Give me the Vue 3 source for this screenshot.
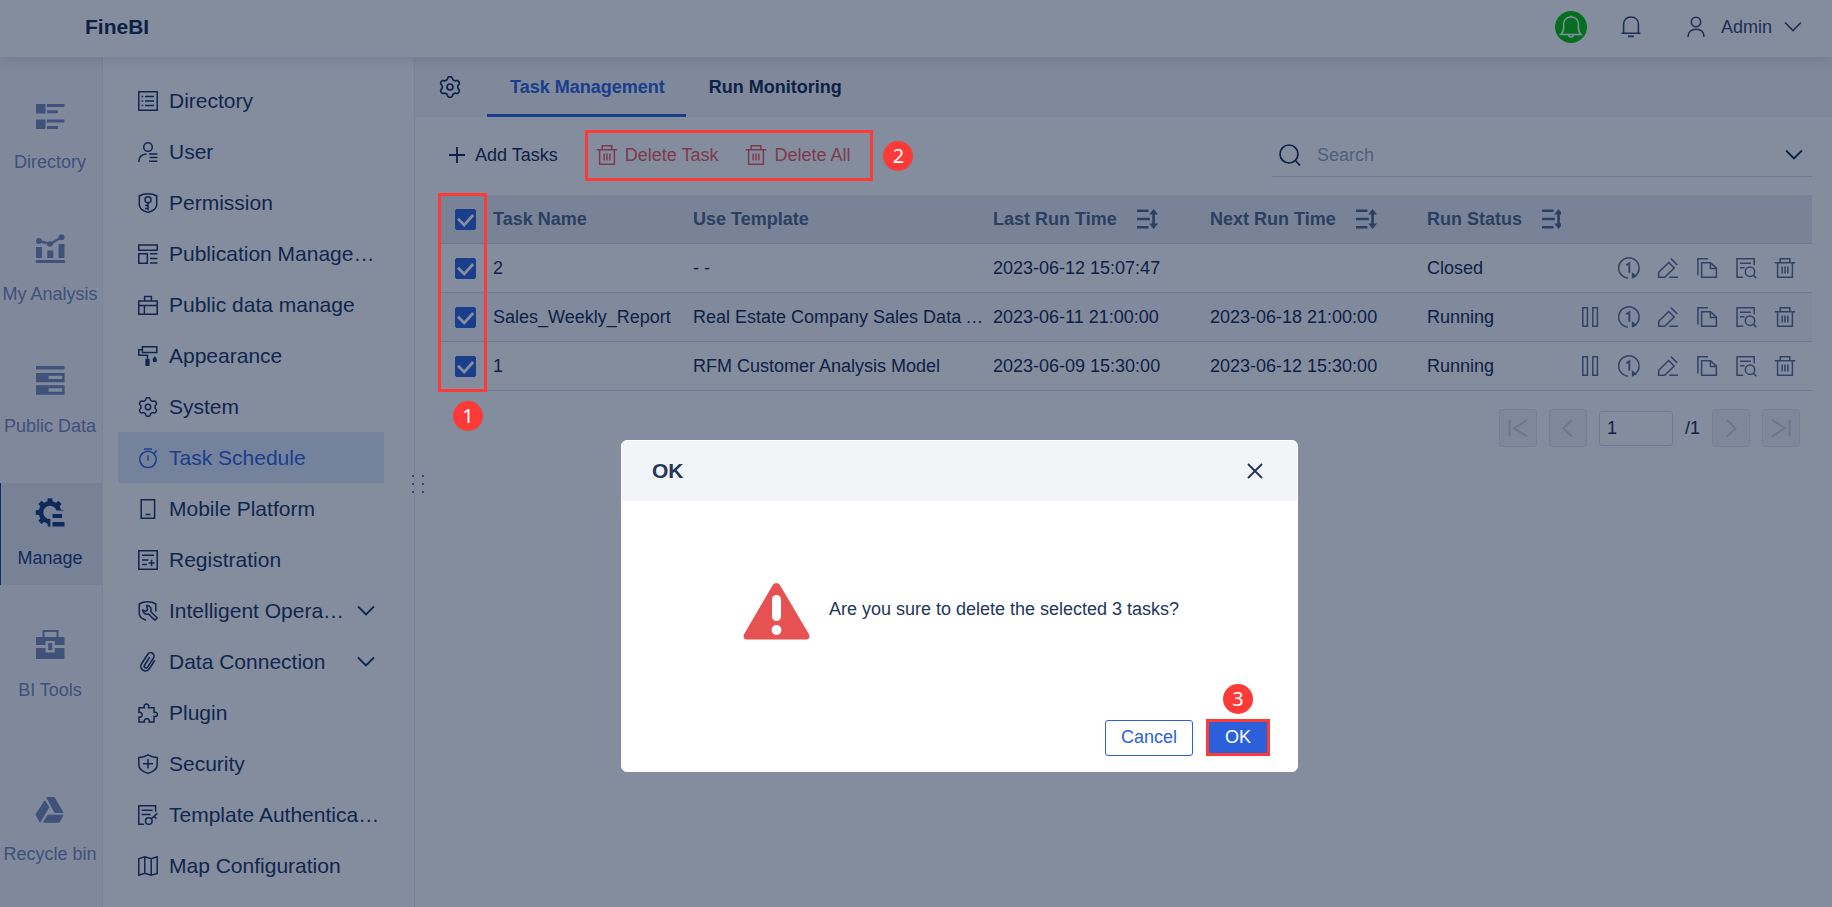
<script setup>
import { ref } from 'vue'

// Outline of a cog with rounded lobes, first lobe pointing up.
function lobedGear(cx, cy, mid, swing, lobes) {
  const points = []
  for (let i = 0; i < 120; i++) {
    const a = (i / 120) * Math.PI * 2
    const r = mid + swing * Math.tanh(2 * Math.cos(lobes * a))
    points.push(`${(cx + r * Math.sin(a)).toFixed(2)} ${(cy - r * Math.cos(a)).toFixed(2)}`)
  }
  return `M${points.join('L')}Z`
}

// Solid cog with square teeth.
function toothedGear(cx, cy, inner, outer, teeth) {
  const points = []
  const step = (Math.PI * 2) / teeth
  for (let i = 0; i < teeth; i++) {
    const corners = [[-0.29, inner], [-0.2, outer], [0.2, outer], [0.29, inner]]
    for (const [offset, r] of corners) {
      const a = (i + offset) * step
      points.push(`${(cx + r * Math.sin(a)).toFixed(2)} ${(cy - r * Math.cos(a)).toFixed(2)}`)
    }
  }
  return `M${points.join('L')}Z`
}

const line = (inner, width = 1.5) =>
  `<g fill="none" stroke="currentColor" stroke-width="${width}">${inner}</g>`

const gear = line(`<path stroke-linejoin="round" d="${lobedGear(10, 10, 8.2, 1.15, 6)}"/><circle cx="10" cy="10" r="2.7"/>`)

const menuIcons = {
  directory: line('<path d="M.8.8h18.400v18.400H.8zM7 5.500h9M7 10h9M7 14.500h9M3.600 5.500h1.600M3.600 10h1.600M3.600 14.500h1.600"/>'),
  user: line('<circle cx="10" cy="5.100" r="4.300"/><path d="M.8 20c0-4.800 3-7.800 7.800-8M11 12h8.400M11.600 15.600h7.800M11 19.200h8.400"/>'),
  permission: line('<path d="M1.300 3C4.200 1.200 7 .8 10 .8s5.800.4 8.700 2.200V12c0 3.600-3.600 5.800-8.700 7.400C4.900 17.800 1.300 15.600 1.300 12z"/><circle cx="10" cy="6.800" r="3"/><path d="M10 9.800v7.400M10 12.600H7.200M10 15.600H7.200"/>'),
  publication: line('<path d="M.8 1h18.400v5.200H.8zM.8 9.800h8.500v9.400H.8zM12 9.800h7.400M12 14.400h7.400M12 19h7.400"/>'),
  publicData: line('<path d="M6.600 6V1.600h6.800V6M.8 6h18.400v13.200H.8zM.8 10.400h18.400M6.400 10.400v8.800"/>'),
  appearance: line('<path d="M4.400.8h14.400v5.800H4.400zM4.400 3.800H.8v5.400h8.700v4"/>') +
    '<path fill="currentColor" d="M7.400 13h4.200v7H7.400zM16.800 10c1.200 1.700 2.200 2.800 2.200 4a2.200 2.200 0 0 1-4.400 0c0-1.200 1-2.300 2.200-4z"/>',
  system: gear,
  schedule: line('<circle cx="10" cy="11.400" r="8.200"/><path d="M6 .9h8M10 7.200v5.200M16 5.200l2.600-2.600"/>'),
  mobile: line('<path d="M3.200.8h13.400v18.400H3.200zM7.600 15.600h4.800"/>'),
  registration: line('<path d="M.8.8h18.400v18.400H.8zM4 5.300h12M4 10h6.400M4 14.600h5M13.600 9.800v6.400M10.600 13h6"/>'),
  intelligent: line('<path d="M17.800 10.500V3C15 1.200 12.500.8 9.600.8 6.800.8 4 1.200 1.200 3v9.500c0 3.400 3 5.400 6.800 6.800"/><path stroke-linejoin="round" d="M8.500 4.600c2.500-.3 4.600 1.500 4.600 4 0 .8-.2 1.300-.5 1.900l6.600 6.500-2.300 2.300-6.500-6.400c-2.500.9-5.600-.7-5.900-3.900l3.200 1.400 2-1.900z"/>'),
  clip: line('<g transform="rotate(33 10 10)"><path d="M14.800 5v10a4.600 4.600 0 0 1-9.200 0V3.600a3.400 3.400 0 0 1 6.800 0v11a1.800 1.800 0 0 1-3.600 0V5"/></g>', 1.600),
  plugin: line('<path d="M1 4.800h5.400c-.8-2 .2-3.700 2-3.700s2.800 1.700 2 3.700H16v4.600c1.800-.6 3.400.3 3.400 2s-1.600 2.600-3.400 2v5.600h-4.800c.6-2-.6-3.300-2.400-3.300S5.800 17 6.400 19H1v-5c2 .5 3.200-.6 3.200-2.300S3 9 1 9.500z"/>'),
  security: line('<path d="M10 .8C7.400 2.500 4.200 3.300.8 3.500v7.300c0 4.400 3.800 7 9.200 8.600 5.400-1.600 9.200-4.200 9.200-8.600V3.500C15.800 3.300 12.600 2.500 10 .8zM10 5v9.600M5 9.800h10"/>'),
  template: line('<path d="M6 19.200H.8V.8h16.800v6M3.600 5.200h11M3.600 9.600h9"/><circle cx="10.800" cy="16" r="3.300"/><path d="M13.200 13.700l6.200-5.300M16.200 11.400l2.200 2.200"/>'),
  map: line('<path d="M.8 2.600 6.800.8l6.400 1.800 6-1.800v16.600l-6 1.800-6.400-1.800-6 1.800zM6.800.8v16.600M13.200 2.600v16.600"/>')
}

const railIcons = {
  directory: '<path fill="currentColor" d="M1 2h9.500v9.500H1zM12 2h17.500v3H12zM12 8.300h11v3H12zM1 17.500h9.500V27H1zM12 17.500h17.500v3H12zM12 24h11v3H12z"/>',
  analysis: '<g fill="currentColor"><path d="M1 13h6v11H1zM12.300 16.500h6V24h-6zM23.500 10h6v14h-6zM.800 26h29v3H.800z"/><circle cx="4" cy="7" r="3"/><circle cx="15" cy="10" r="2.800"/><circle cx="26.500" cy="3.300" r="3"/></g>' +
    line('<path d="M4 7l11 3 11.500-6.700"/>', 2.4),
  publicData: '<path fill="currentColor" fill-rule="evenodd" d="M1 0h28.600v3.600H1zM1 7h28.600v9.200H1zm12.600 2.800v3.300h13.600V9.800zM1 19.300h28.600v9.400H1zm12.600 2.900v3.500h13.600v-3.500z"/>',
  manage: `<clipPath id="manage-cut"><path d="M0-1h30v13.600H15.400V30H0z"/></clipPath>
    <path clip-path="url(#manage-cut)" fill="currentColor" fill-rule="evenodd" d="${toothedGear(15, 14.4, 11.4, 14.4, 8)}M15 7.700a6.700 6.700 0 1 0 0 13.400a6.700 6.700 0 1 0 0-13.400z"/>
    <path fill="currentColor" d="M17.500 16H27v4h-9.500zM17.500 24h12v4.600h-12z"/>`,
  tools: '<path fill="currentColor" fill-rule="evenodd" d="M7.500 0h16v7h6v8h-9.700v-4h-9.300v4H1V7h6.500zm2 2v5h12V2zM13.300 13h4v7h-4zM1 18h9.500v4.500h9.300V18h9.700v11H1z"/>',
  recycle: '<g fill="currentColor" stroke="currentColor" stroke-width="1" stroke-linejoin="round"><path d="M11.800 3.500h7.500L28 18.500h-8.200zM9.800 6.800l4 6.400L5 28.200.900 20.500zM12.900 21.200H28l-3.700 7H8.500z"/></g>'
}

const actionIcons = {
  pause: line('<path d="M3.800 1.800h4.600v18.400H3.800zM13.800 1.800h4.600v18.400h-4.600z"/>'),
  once: line('<path d="M10 21.200A10.200 10.200 0 1 1 17 19.200"/><path stroke-width="1.900" d="M8.300 8.200l3-2v9.600"/>') +
    '<path fill="currentColor" d="M13.800 15v6.800l5.200-2.600z"/>',
  edit: line('<path d="M1.700 20.300v-5L11.700 5.500l5.500 5.500-9.500 9.300zM13.800 1.500l6.400 6.400M12.300 20.300H21"/>'),
  copy: line('<path d="M1.900 18.500V1.700H12M5.600 5.800h9l5.800 5.400v9H5.600zM14.400 5.800v5.600h6"/>'),
  log: line('<path d="M8.200 20.300H2V1.800h17.200v6.400M5 6.200h11M5 10.800h4.500"/><circle cx="15" cy="14.700" r="4.700"/><path d="M18.300 18l3 3.200"/>'),
  trash: line('<path d="M.8 5.800h20.400M6.200 5.800v-4h9.600v4M3.600 5.800v14.500h14.800V5.800M8.200 9.400v7.200M11 9.400v7.200M13.800 9.400v7.200"/>')
}

const railItems = [
  { label: 'Directory', icon: 'directory' },
  { label: 'My Analysis', icon: 'analysis' },
  { label: 'Public Data', icon: 'publicData' },
  { label: 'Manage', icon: 'manage', active: true },
  { label: 'BI Tools', icon: 'tools' },
  { label: 'Recycle bin', icon: 'recycle', last: true }
]

const menuItems = [
  { label: 'Directory', icon: 'directory' },
  { label: 'User', icon: 'user' },
  { label: 'Permission', icon: 'permission' },
  { label: 'Publication Management', icon: 'publication' },
  { label: 'Public data manage', icon: 'publicData' },
  { label: 'Appearance', icon: 'appearance' },
  { label: 'System', icon: 'system' },
  { label: 'Task Schedule', icon: 'schedule', active: true },
  { label: 'Mobile Platform', icon: 'mobile' },
  { label: 'Registration', icon: 'registration' },
  { label: 'Intelligent Operation', icon: 'intelligent', expandable: true },
  { label: 'Data Connection', icon: 'clip', expandable: true },
  { label: 'Plugin', icon: 'plugin' },
  { label: 'Security', icon: 'security' },
  { label: 'Template Authentication', icon: 'template' },
  { label: 'Map Configuration', icon: 'map' }
]

const columns = [
  { label: 'Task Name' },
  { label: 'Use Template' },
  { label: 'Last Run Time', sortable: true },
  { label: 'Next Run Time', sortable: true },
  { label: 'Run Status', sortable: true }
]

const common = ['once', 'edit', 'copy', 'log', 'trash']
const actionNames = { pause: 'Pause', once: 'Run once', edit: 'Edit', copy: 'Copy', log: 'View log', trash: 'Delete' }

const tasks = ref([
  { name: '2', template: '- -', last: '2023-06-12 15:07:47', next: '', status: 'Closed', checked: true, actions: common },
  { name: 'Sales_Weekly_Report', template: 'Real Estate Company Sales Data Analysis', last: '2023-06-11 21:00:00', next: '2023-06-18 21:00:00', status: 'Running', checked: true, hovered: true, actions: ['pause', ...common] },
  { name: '1', template: 'RFM Customer Analysis Model', last: '2023-06-09 15:30:00', next: '2023-06-12 15:30:00', status: 'Running', checked: true, actions: ['pause', ...common] }
])
const allChecked = ref(true)
const page = ref('1')
const search = ref('')
</script>

<template>
  <div class="app">
    <header class="topbar">
      <strong class="brand">FineBI</strong>
      <div class="topbar-tools">
        <button class="plain green-bell" type="button" aria-label="Notices">
          <svg width="32" height="32" viewBox="0 0 32 32">
            <circle cx="16" cy="16" r="16" fill="#03c103" />
            <path d="M6 23.500c2-1.800 2.600-3.500 2.600-7v-3c0-4.500 3-7.500 7.400-7.500s7.400 3 7.400 7.500v3c0 3.500.600 5.200 2.600 7zM13.400 24a2.700 2.700 0 0 0 5.200 0M16 4.500V6" fill="none" stroke="#fff" stroke-width="1.500" />
          </svg>
        </button>
        <button class="plain bell" type="button" aria-label="Messages">
          <svg width="20" height="22" viewBox="0 0 20 22">
            <path d="M.5 17.200h19M2.600 17V8.500C2.600 4 5.500 1 10 1s7.400 3 7.400 7.500V17M7 20.400h6" fill="none" stroke="currentColor" stroke-width="1.600" />
          </svg>
        </button>
        <button class="plain account" type="button">
          <svg width="18" height="22" viewBox="0 0 18 22">
            <circle cx="9" cy="6" r="4.700" fill="none" stroke="currentColor" stroke-width="1.600" />
            <path d="M1 21c0-5 3-7.800 8-7.800s8 2.800 8 7.800" fill="none" stroke="currentColor" stroke-width="1.600" />
          </svg>
          <span>Admin</span>
          <svg width="18" height="18" viewBox="0 0 18 18"><path d="M1 4.500l8 8 8-8" fill="none" stroke="currentColor" stroke-width="1.700" /></svg>
        </button>
      </div>
    </header>

    <div class="body">
      <nav class="rail" aria-label="Modules">
        <a v-for="item in railItems" :key="item.label" href="#" class="rail-item" :class="{ active: item.active, last: item.last }">
          <svg width="30" height="30" viewBox="0 0 30 30" v-html="railIcons[item.icon]"></svg>
          <span>{{ item.label }}</span>
        </a>
      </nav>

      <aside class="menu" aria-label="Manage">
        <a v-for="item in menuItems" :key="item.label" href="#" class="menu-item" :class="{ active: item.active }">
          <svg class="menu-icon" width="20" height="20" viewBox="0 0 20 20" v-html="menuIcons[item.icon]"></svg>
          <span class="menu-label">{{ item.label }}</span>
          <svg v-if="item.expandable" class="menu-chevron" width="18" height="18" viewBox="0 0 18 18"><path d="M1 4.500l8 8 8-8" fill="none" stroke="currentColor" stroke-width="1.800" /></svg>
        </a>
        <span class="grip" aria-hidden="true"><i v-for="n in 6" :key="n"></i></span>
      </aside>

      <main class="main">
        <div class="tabs">
          <button class="plain tab-gear" type="button" aria-label="Settings">
            <svg width="22" height="22" viewBox="0 0 20 20" v-html="gear"></svg>
          </button>
          <button class="plain tab active" type="button">Task Management</button>
          <button class="plain tab" type="button">Run Monitoring</button>
        </div>

        <div class="content">
          <div class="toolbar">
            <button class="plain tool add" type="button">
              <svg width="16" height="16" viewBox="0 0 16 16"><path d="M8 0v16M0 8h16" stroke="currentColor" stroke-width="1.800" /></svg>
              Add Tasks
            </button>
            <div class="danger-group">
              <button class="plain tool danger" type="button">
                <svg width="22" height="22" viewBox="0 0 22 22" v-html="actionIcons.trash"></svg>
                Delete Task
              </button>
              <button class="plain tool danger" type="button">
                <svg width="22" height="22" viewBox="0 0 22 22" v-html="actionIcons.trash"></svg>
                Delete All
              </button>
              <span class="frame"></span>
              <span class="step step-right">2</span>
            </div>
            <label class="search">
              <svg width="22" height="22" viewBox="0 0 22 22"><circle cx="10" cy="10" r="9" fill="none" stroke="currentColor" stroke-width="1.700" /><path d="M16 16l5 5.500" stroke="currentColor" stroke-width="1.700" /></svg>
              <input v-model="search" type="text" placeholder="Search" aria-label="Search">
              <svg width="18" height="18" viewBox="0 0 18 18"><path d="M1 4.500l8 8 8-8" fill="none" stroke="currentColor" stroke-width="1.800" /></svg>
            </label>
          </div>

          <div class="table-wrap">
            <table class="table">
              <colgroup>
                <col class="c-check"><col class="c-name"><col class="c-template"><col class="c-time"><col class="c-time"><col class="c-status"><col>
              </colgroup>
              <thead>
                <tr>
                  <th class="check-cell">
                    <label class="check">
                      <input v-model="allChecked" type="checkbox" aria-label="Select all">
                      <svg v-if="allChecked" width="21" height="21" viewBox="0 0 21 21"><path d="M3 9.800l6.200 6.200 9-10" fill="none" stroke="#fff" stroke-width="2.800" /></svg>
                    </label>
                  </th>
                  <th v-for="col in columns" :key="col.label">
                    <span class="th-label">
                      {{ col.label }}
                      <svg v-if="col.sortable" width="21" height="20" viewBox="0 0 21 20">
                        <path d="M0 1.800h11.500M0 10h12.800M0 18.200h11.500M16.600 3v14" fill="none" stroke="currentColor" stroke-width="2.600" />
                        <path d="M16.600 0l4.400 5.500h-8.800zM16.600 20l4.400-5.500h-8.800z" fill="currentColor" />
                      </svg>
                    </span>
                  </th>
                  <th></th>
                </tr>
              </thead>
              <tbody>
                <tr v-for="task in tasks" :key="task.name" :class="{ hovered: task.hovered }">
                  <td class="check-cell">
                    <label class="check">
                      <input v-model="task.checked" type="checkbox" :aria-label="`Select ${task.name}`">
                      <svg v-if="task.checked" width="21" height="21" viewBox="0 0 21 21"><path d="M3 9.800l6.200 6.200 9-10" fill="none" stroke="#fff" stroke-width="2.800" /></svg>
                    </label>
                  </td>
                  <td>{{ task.name }}</td>
                  <td>{{ task.template }}</td>
                  <td>{{ task.last }}</td>
                  <td>{{ task.next }}</td>
                  <td>{{ task.status }}</td>
                  <td class="action-cell">
                    <div class="actions">
                      <button v-for="name in task.actions" :key="name" class="plain action" type="button" :aria-label="actionNames[name]">
                        <svg width="22" height="22" viewBox="0 0 22 22" v-html="actionIcons[name]"></svg>
                      </button>
                    </div>
                  </td>
                </tr>
              </tbody>
            </table>
            <span class="frame frame-checks"></span>
            <span class="step step-below">1</span>
          </div>

          <div class="pager">
            <button class="page-button" type="button" disabled aria-label="First page">
              <svg width="36" height="36" viewBox="0 0 36 36"><path d="M9.500 10v16.500M27 10l-13 8.200 13 8.300" /></svg>
            </button>
            <button class="page-button" type="button" disabled aria-label="Previous page">
              <svg width="36" height="36" viewBox="0 0 36 36"><path d="M22 10l-8.500 8.200 8.500 8.300" /></svg>
            </button>
            <input v-model="page" class="page-input" type="text" aria-label="Page">
            <span>/1</span>
            <button class="page-button" type="button" disabled aria-label="Next page">
              <svg width="36" height="36" viewBox="0 0 36 36"><path d="M14 10l8.500 8.200-8.500 8.300" /></svg>
            </button>
            <button class="page-button" type="button" disabled aria-label="Last page">
              <svg width="36" height="36" viewBox="0 0 36 36"><path d="M26.500 10v16.500M9 10l13 8.200L9 26.500" /></svg>
            </button>
          </div>
        </div>
      </main>
    </div>

    <div class="mask"></div>

    <section class="dialog" role="dialog" aria-labelledby="dialog-title">
      <header class="dialog-head">
        <h2 id="dialog-title">OK</h2>
        <button class="plain close" type="button" aria-label="Close">
          <svg width="16" height="16" viewBox="0 0 16 16"><path d="M1 1l14 14M15 1L1 15" stroke="currentColor" stroke-width="1.900" /></svg>
        </button>
      </header>
      <div class="dialog-body">
        <svg width="67" height="57" viewBox="0 0 67 57">
          <path d="M29.500 2.400C30.400.800 31.500.3 33.300.3s2.900.5 3.900 2.100L65.800 51c1.600 2.900.3 5.400-2.800 5.400H4c-3.100 0-4.400-2.500-2.800-5.400z" fill="#e65251" />
          <rect x="29" y="12" width="9" height="26" rx="4.500" fill="#fff" />
          <circle cx="33.500" cy="47" r="4.900" fill="#fff" />
        </svg>
        <p>Are you sure to delete the selected 3 tasks?</p>
      </div>
      <footer class="dialog-foot">
        <button class="button cancel" type="button">Cancel</button>
        <div class="ok-group">
          <button class="button ok" type="button">OK</button>
          <span class="step step-above">3</span>
        </div>
      </footer>
    </section>
  </div>
</template>

<style>
body {
  margin: 0;
  background: #fff;
}
</style>

<style scoped>
.app {
  position: relative;
  display: flex;
  flex-direction: column;
  min-height: 100vh;
  box-sizing: border-box;
  overflow: hidden;
  font: 18px/24px "Liberation Sans", Arial, sans-serif;
  color: #10264c;
}
.app *,
.app *::before {
  box-sizing: border-box;
}
.plain {
  margin: 0;
  padding: 0;
  border: 0;
  background: none;
  font: inherit;
  color: inherit;
  cursor: pointer;
}
svg {
  display: block;
  flex: none;
}
a {
  color: inherit;
  text-decoration: none;
}

.topbar {
  position: relative;
  z-index: 1;
  display: flex;
  flex: none;
  align-items: center;
  justify-content: space-between;
  height: 57px;
  padding: 0 30px 3px 85px;
  background: #fff;
  box-shadow: 0 2px 14px rgba(9, 30, 64, 0.14);
}
.brand {
  font-size: 21px;
}
.topbar-tools {
  display: flex;
  align-items: center;
  color: #2f4468;
}
.bell {
  margin-left: 34px;
}
.account {
  display: flex;
  align-items: center;
  gap: 12px;
  margin-left: 46px;
}
.account span {
  margin-left: 4px;
}

.body {
  display: flex;
  flex: 1;
}
.rail {
  display: flex;
  flex: none;
  flex-direction: column;
  gap: 30px;
  width: 103px;
  padding: 30px 0 26px;
  border-right: 1px solid #e9ecf2;
  background: #f4f6f9;
  color: #7686b6;
}
.rail-item {
  display: flex;
  flex-direction: column;
  align-items: center;
  gap: 18px;
  height: 102px;
  padding-top: 15px;
  padding-right: 3px;
  border-left: 1px solid transparent;
  white-space: nowrap;
}
.rail-item.active {
  border-left-color: #173a96;
  background: #e7e9f1;
  color: #173778;
}
.rail-item.last {
  margin-top: auto;
}

.menu {
  position: relative;
  flex: none;
  width: 312px;
  padding: 18px 30px 15px 15px;
  border-right: 1px solid #e9ecf2;
  background: #fff;
  font-size: 21px;
  color: #16305a;
}
.menu-item {
  display: flex;
  align-items: center;
  gap: 11px;
  height: 51px;
  padding: 0 2px 0 20px;
}
.menu-item.active {
  background: #dfe8fb;
  color: #2c60db;
}
.menu-label {
  flex: 1;
  overflow: hidden;
  text-overflow: ellipsis;
  white-space: nowrap;
}
.menu-chevron {
  margin-right: 7px;
}
.grip {
  position: absolute;
  top: 418px;
  right: -10px;
  display: grid;
  grid-template-columns: 2px 2px;
  gap: 6px 8px;
}
.grip i {
  width: 2px;
  height: 2px;
  background: #63769a;
}

.main {
  flex: 1;
  min-width: 0;
  background: #fff;
}
.tabs {
  display: flex;
  height: 60px;
  padding-left: 24px;
  background: #f4f6f9;
}
.tab-gear {
  width: 48px;
}
.tab {
  padding: 0 21px 0 23px;
  border-top: 3px solid transparent;
  border-bottom: 3px solid transparent;
  font-weight: bold;
}
.tab.active {
  border-bottom-color: #2c60db;
  color: #2c60db;
}
.content {
  padding: 0 20px 0 24px;
}
.toolbar {
  display: flex;
  align-items: center;
  height: 78px;
  padding-bottom: 2px;
}
.tool {
  display: flex;
  align-items: center;
  gap: 7px;
}
.add {
  gap: 10px;
  padding-left: 10px;
}
.danger-group {
  position: relative;
  display: flex;
  align-items: center;
  gap: 27px;
  height: 51px;
  margin-left: 27px;
  padding: 0 23px 0 11px;
}
.danger {
  color: #ee5a5c;
}
.frame {
  position: absolute;
  inset: 0;
  z-index: 30;
  border: 3px solid #fc3b38;
  pointer-events: none;
}
.step {
  position: absolute;
  z-index: 30;
  width: 30px;
  height: 30px;
  border-radius: 50%;
  background: #fc3b38;
  color: #fff;
  font: 20px/29px "Noto Sans", "Open Sans", sans-serif;
  text-align: center;
}
.step-right {
  top: 11px;
  left: calc(100% + 10px);
}
.search {
  display: flex;
  align-items: center;
  gap: 16px;
  width: 540px;
  height: 43px;
  margin-left: auto;
  padding: 0 9px 0 7px;
  border-bottom: 1px solid #d5dae3;
}
.search input {
  flex: 1;
  min-width: 0;
  padding: 0;
  border: 0;
  outline: 0;
  background: none;
  font: inherit;
  color: inherit;
}
.search input::placeholder {
  color: #97a3b7;
  opacity: 1;
}

.table-wrap {
  position: relative;
}
.table {
  width: 100%;
  border-collapse: separate;
  border-spacing: 0;
  table-layout: fixed;
}
.c-check { width: 48px; }
.c-name { width: 200px; }
.c-template { width: 300px; }
.c-time { width: 217px; }
.c-status { width: 140px; }
th,
td {
  height: 49px;
  padding: 0 2px 0 6px;
  border-bottom: 1px solid #d5dae3;
  overflow: hidden;
  text-align: left;
  text-overflow: ellipsis;
  white-space: nowrap;
}
th {
  background: #e7eaf1;
  color: #4d6387;
}
.th-label {
  display: flex;
  align-items: center;
  gap: 20px;
}
.hovered td {
  background: #f6f8fb;
}
.check-cell {
  padding: 0 0 0 16px;
}
.check {
  display: grid;
  width: 21px;
}
.check > * {
  grid-area: 1 / 1;
}
.check input {
  width: 21px;
  height: 21px;
  margin: 0;
  border: 1px solid #2c60db;
  border-radius: 2px;
  appearance: none;
}
.check input:checked {
  background: #2c60db;
}
.check svg {
  pointer-events: none;
}
.action-cell {
  padding: 0 8px 0 0;
}
.actions {
  display: flex;
  justify-content: flex-end;
  color: #566a8b;
}
.action {
  display: flex;
  flex: none;
  justify-content: center;
  width: 39px;
}
.frame-checks {
  inset: -2px auto -1px -1px;
  width: 49px;
}
.step-below {
  top: calc(100% + 10px);
  left: 14px;
}

.pager {
  display: flex;
  align-items: center;
  justify-content: flex-end;
  gap: 12px;
  padding: 18px 12px;
}
.page-button {
  width: 38px;
  height: 38px;
  padding: 0;
  border: 1px solid #e0e4eb;
  border-radius: 3px;
  background: #f3f5f9;
}
.page-button path {
  fill: none;
  stroke: #cdd3df;
  stroke-width: 2;
}
.page-input {
  width: 74px;
  height: 35px;
  padding: 0 7px;
  border: 1px solid #d5dae3;
  border-radius: 3px;
  background: #fff;
  font: inherit;
  color: inherit;
}

.mask {
  position: absolute;
  inset: 0;
  z-index: 20;
  background: rgba(9, 27, 61, 0.5);
}
.dialog {
  position: absolute;
  top: 440px;
  left: calc(50% - 295px);
  z-index: 25;
  display: flex;
  flex-direction: column;
  width: 677px;
  height: 332px;
  border: 1px solid #fff;
  border-radius: 6px;
  background: #fff;
  color: #22365a;
}
.dialog-head {
  display: flex;
  align-items: center;
  justify-content: space-between;
  height: 60px;
  padding: 0 34px 0 30px;
  border-radius: 5px 5px 0 0;
  background: #f2f4f8;
}
.dialog-head h2 {
  margin: 0;
  font-size: 21px;
}
.dialog-body {
  display: flex;
  flex: 1;
  align-items: center;
  justify-content: center;
  gap: 19px;
  padding: 2px 0 0 3px;
}
.dialog-body p {
  margin: 0;
  padding-bottom: 4px;
}
.dialog-foot {
  display: flex;
  align-items: flex-end;
  justify-content: flex-end;
  gap: 13px;
  padding: 0 27px 15px 0;
}
.button {
  display: block;
  height: 36px;
  padding: 0 0 3px;
  font: inherit;
  cursor: pointer;
}
.cancel {
  width: 88px;
  border: 1px solid #2c60db;
  border-radius: 3px;
  background: #fff;
  color: #2c60db;
}
.ok-group {
  position: relative;
}
.ok {
  width: 64px;
  height: 37px;
  padding-bottom: 2px;
  border: 3px solid #fc3b38;
  background: #2c60db;
  color: #fff;
}
.step-above {
  bottom: calc(100% + 5px);
  left: 17px;
}
</style>
